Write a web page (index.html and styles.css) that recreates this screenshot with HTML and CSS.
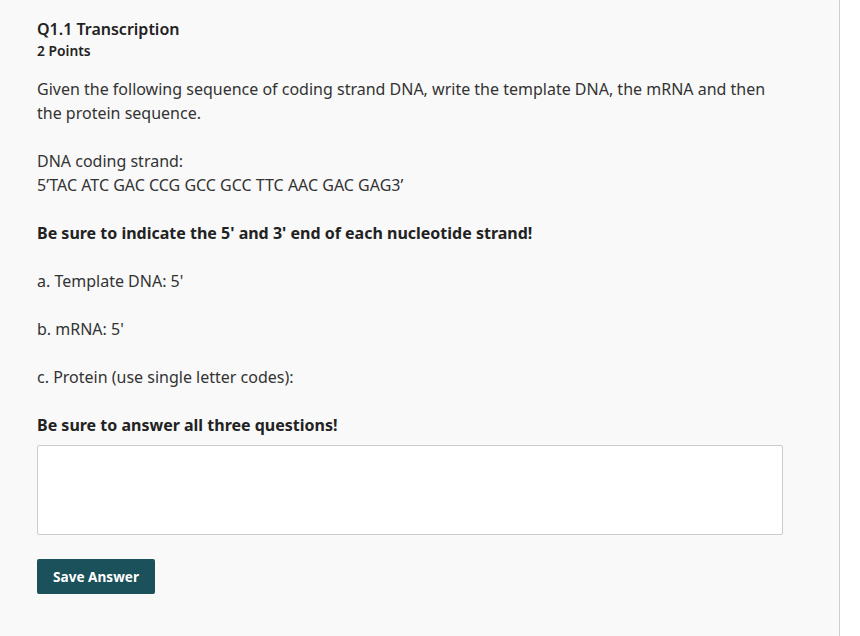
FILE: index.html
```html
<!DOCTYPE html>
<html>
<head>
<meta charset="utf-8">
<link rel="stylesheet" href="styles.css">
</head>
<body>
<main class="page">
  <div class="question">
    <h1 class="title">Q1.1 Transcription</h1>
    <div class="points">2 Points</div>
    <div class="prompt">
      <p>Given the following sequence of coding strand DNA, write the template DNA, the mRNA and then the protein sequence.</p>
      <p>DNA coding strand:<br>5’TAC ATC GAC CCG GCC GCC TTC AAC GAC GAG3’</p>
      <p class="strong">Be sure to indicate the 5' and 3' end of each nucleotide strand!</p>
      <p>a. Template DNA: 5'</p>
      <p>b. mRNA: 5'</p>
      <p>c. Protein (use single letter codes):</p>
      <p class="strong last">Be sure to answer all three questions!</p>
    </div>
    <textarea class="answer"></textarea>
    <button class="save">Save Answer</button>
  </div>
</main>
</body>
</html>
```
FILE: styles.css
```css
html, body {
  margin: 0;
  padding: 0;
  background: #ffffff;
}
body {
  font-family: "Noto Sans", "Open Sans", sans-serif;
  color: #333333;
}
.page {
  box-sizing: border-box;
  width: 840px;
  height: 636px;
  background: #f9f9f9;
  border-right: 1px solid #cfcfcf;
  padding: 17px 0 0 37px;
}
.question {
  width: 746px;
}
.title {
  margin: 0;
  font-size: 16px;
  font-weight: 600;
  line-height: 24px;
  color: #222;
}
.points {
  font-size: 13.8px;
  font-weight: 600;
  line-height: 20px;
  color: #222;
}
.prompt {
  margin-top: 16px;
}
.prompt p {
  margin: 0 0 24px;
  font-size: 16px;
  line-height: 24px;
}
.prompt p.strong {
  font-weight: 700;
  color: #222;
}
.prompt p.last {
  margin-bottom: 8px;
}
.answer {
  display: block;
  box-sizing: border-box;
  width: 746px;
  height: 90px;
  margin: 0;
  border: 1px solid #cccccc;
  border-radius: 2px;
  background: #ffffff;
  resize: none;
  font-family: inherit;
}
.save {
  display: block;
  margin-top: 24px;
  width: 118px;
  height: 35px;
  border: none;
  border-radius: 2px;
  background: #1b515a;
  color: #ffffff;
  font-family: "Noto Sans", sans-serif;
  font-size: 13.6px;
  font-weight: 700;
  padding: 0;
}
```
